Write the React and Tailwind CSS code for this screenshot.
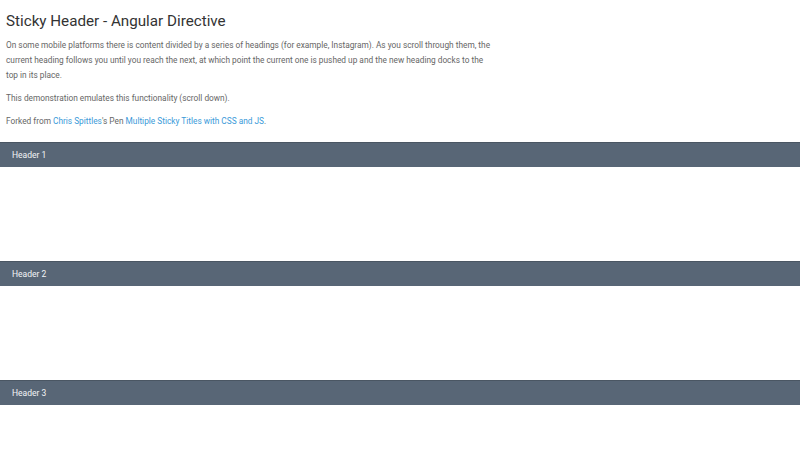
import React from 'react';

const Section = ({ title }) => (
    <div>
        <div className="h-[25px] bg-[#586676] border-t border-[#4a5663] flex items-center px-[12px] text-[8.5px] text-[#f4f5f6]">
            {title}
        </div>
        <div className="h-[94px] bg-white"></div>
    </div>
);

export default function App() {
    return (
        <div className="w-[800px] h-[450px] overflow-hidden bg-white font-['Roboto',sans-serif]">
            <div className="px-[6px] pt-[11px] pb-[13px] text-[#666]">
                <h1 className="text-[15.2px] leading-[20px] text-[#333] font-normal">Sticky Header - Angular Directive</h1>
                <p className="mt-[7px] text-[8.3px] leading-[15px] max-w-[488px]">
                    On some mobile platforms there is content divided by a series of headings (for example, Instagram). As you scroll through them, the current heading follows you until you reach the next, at which point the current one is pushed up and the new heading docks to the top in its place.
                </p>
                <p className="mt-[8px] text-[8.3px] leading-[15px]">This demonstration emulates this functionality (scroll down).</p>
                <p className="mt-[8px] text-[8.3px] leading-[15px]">
                    Forked from <a className="text-[#3a9ad9]">Chris Spittles</a>'s Pen <a className="text-[#3a9ad9]">Multiple Sticky Titles with CSS and JS</a>.
                </p>
            </div>
            <Section title="Header 1" />
            <Section title="Header 2" />
            <Section title="Header 3" />
        </div>
    );
}
